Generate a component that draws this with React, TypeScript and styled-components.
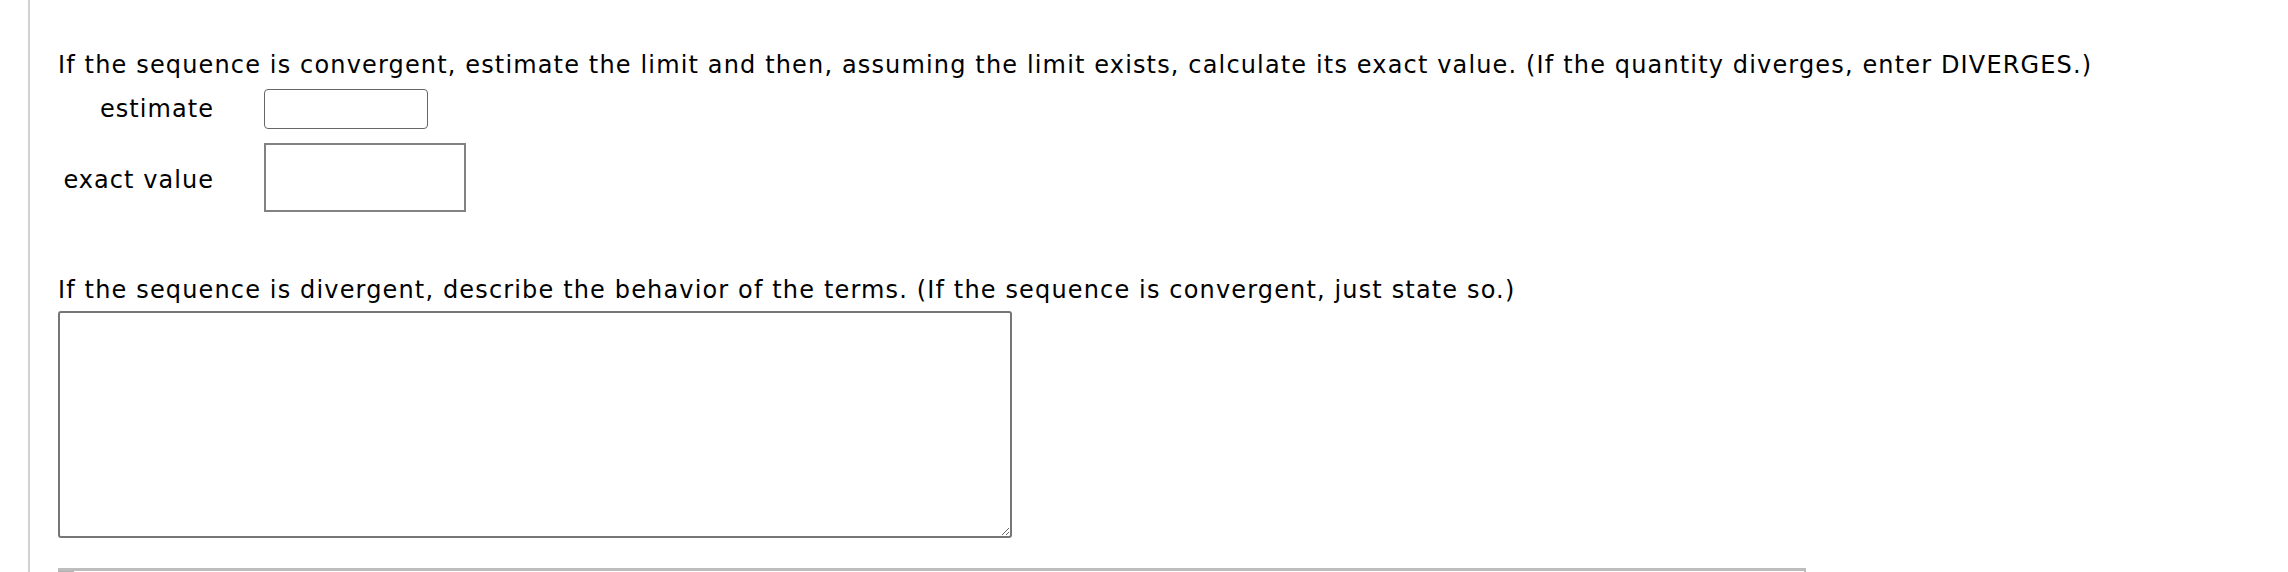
import React from "react";
import styled, { createGlobalStyle } from "styled-components";

const GlobalStyle = createGlobalStyle`
  html, body {
    margin: 0;
    padding: 0;
    background: #fff;
  }
  body {
    font-family: "DejaVu Sans", Verdana, sans-serif;
    color: #000;
  }
`;

const App = () => {
  return (
    <>
      <GlobalStyle />
      <Page>
        <Panel>
          <Prompt>
            If the sequence is convergent, estimate the limit and then, assuming the limit exists,
            calculate its exact value. (If the quantity diverges, enter DIVERGES.)
          </Prompt>
          <AnswerGrid>
            <Label>estimate</Label>
            <SmallInput type="text" />
            <Label $lower>exact value</Label>
            <BoxInput />
          </AnswerGrid>
          <Prompt $spaced>
            If the sequence is divergent, describe the behavior of the terms. (If the sequence is
            convergent, just state so.)
          </Prompt>
          <Essay />
          <FooterBar>
            <FooterTab />
          </FooterBar>
        </Panel>
      </Page>
    </>
  );
};

export default App;

// ****  STYLED COMPONENTS  ****

const Page = styled.div`
  width: 2288px;
  height: 572px;
  overflow: hidden;
  padding-left: 28px;
  box-sizing: border-box;
`;

const Panel = styled.div`
  height: 100%;
  border-left: 2px solid #d2d2d2;
  padding: 51px 0 0 28px;
  box-sizing: border-box;
  display: flex;
  flex-direction: column;
  align-items: flex-start;
  & > * {
    flex-shrink: 0;
  }
`;

const Prompt = styled.p<{ $spaced?: boolean }>`
  margin: ${(p) => (p.$spaced ? "64px" : "0")} 0 0 0;
  font-size: 24px;
  line-height: 28px;
  letter-spacing: 1.15px;
  white-space: nowrap;
`;

const AnswerGrid = styled.div`
  display: grid;
  grid-template-columns: 155px 202px;
  column-gap: 50px;
  row-gap: 14px;
  margin-top: 10px;
  margin-left: 1px;
  align-items: center;
`;

const Label = styled.span<{ $lower?: boolean }>`
  font-size: 24px;
  line-height: 28px;
  letter-spacing: 1.05px;
  text-align: right;
  padding-top: ${(p) => (p.$lower ? "4px" : "0")};
`;

const SmallInput = styled.input`
  width: 164px;
  height: 40px;
  box-sizing: border-box;
  border: 1.5px solid #666;
  border-radius: 4px;
  background: #fff;
  margin: 0;
`;

const BoxInput = styled.div`
  width: 202px;
  height: 69px;
  box-sizing: border-box;
  border: 2px solid #828282;
  background: #fff;
`;

const Essay = styled.textarea`
  margin-top: 7px;
  width: 954px;
  height: 227px;
  box-sizing: border-box;
  border: 2px solid #767676;
  border-radius: 3px;
  background: #fff;
  resize: both;
  font-family: "DejaVu Sans", Verdana, sans-serif;
`;

const FooterBar = styled.div`
  margin-top: 30px;
  width: 1748px;
  height: 20px;
  border-top: 3px solid #bdbdbd;
  border-right: 2px solid #bdbdbd;
  box-sizing: border-box;
`;

const FooterTab = styled.div`
  width: 16px;
  height: 6px;
  background: #b0b0b0;
`;
